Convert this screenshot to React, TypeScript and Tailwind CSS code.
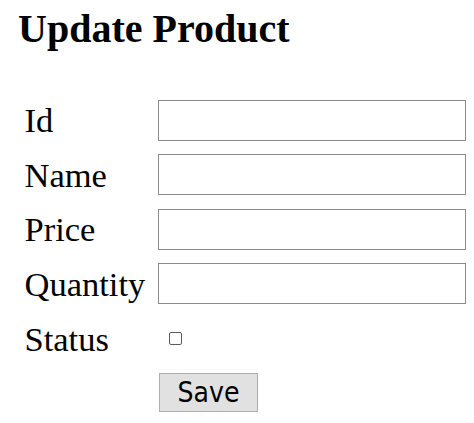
import React from "react";

const fields = ["Id", "Name", "Price", "Quantity"];

export default function App() {
  return (
    <div
      className="min-h-[423px] w-[474px] bg-white pl-[18px] text-black"
      style={{ fontFamily: '"Liberation Serif", "Times New Roman", serif' }}
    >
      <h3 className="pt-[6.5px] text-[40px] font-bold leading-[44px]">Update Product</h3>
      <form className="mt-[49px] flex flex-col gap-[13.67px] pl-[6.5px]">
        {fields.map((f) => (
          <div key={f} className="flex h-[41px] items-center">
            <label className="relative top-[0.5px] w-[133px] text-[34.5px] leading-[41px]">{f}</label>
            <input
              type="text"
              className="h-[41px] w-[308px] border border-[#8a8a8a] bg-white outline-none"
            />
          </div>
        ))}
        <div className="flex h-[41px] items-center">
          <label className="relative top-[0.5px] w-[133px] text-[34.5px] leading-[41px]">Status</label>
          <input
            type="checkbox"
            className="ml-[11.5px] h-[13px] w-[13px] appearance-none rounded-[2px] border border-[#5a5a5a] bg-white"
          />
        </div>
        <div className="flex">
          <div className="w-[134.5px]" />
          <button
            type="button"
            className="flex h-[39px] w-[99px] items-center justify-center border border-[#adadad] bg-[#e1e1e1] pt-[1px] text-[28px] leading-none text-black"
            style={{ fontFamily: '"DejaVu Sans Condensed", "DejaVu Sans", Verdana, sans-serif', fontStretch: "condensed" }}
          >
            Save
          </button>
        </div>
      </form>
    </div>
  );
}
